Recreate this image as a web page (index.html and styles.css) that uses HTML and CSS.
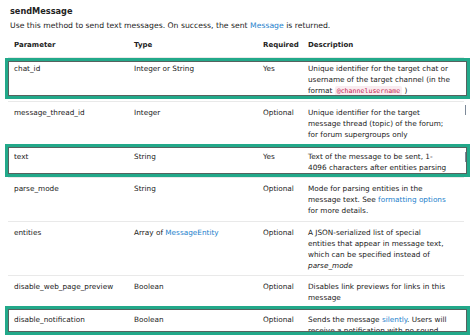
FILE: index.html
```html
<!DOCTYPE html>
<html>
<head>
<meta charset="utf-8">
<link rel="stylesheet" href="styles.css">
</head>
<body>
<div class="page">
  <h4 class="title">sendMessage</h4>
  <p class="lead">Use this method to send text messages. On success, the sent <a href="#">Message</a> is returned.</p>
  <div class="table">
    <div class="row head">
      <div>Parameter</div><div>Type</div><div>Required</div><div>Description</div>
    </div>
    <div class="row">
      <div>chat_id</div><div>Integer or String</div><div>Yes</div>
      <div>Unique identifier for the target chat or<br>username of the target channel (in the<br>format <code>@channelusername</code> )</div>
    </div>
    <div class="row">
      <div>message_thread_id</div><div>Integer</div><div>Optional</div>
      <div>Unique identifier for the target<br>message thread (topic) of the forum;<br>for forum supergroups only</div>
    </div>
    <div class="row">
      <div>text</div><div>String</div><div>Yes</div>
      <div>Text of the message to be sent, 1-<br>4096 characters after entities parsing</div>
    </div>
    <div class="row">
      <div>parse_mode</div><div>String</div><div>Optional</div>
      <div>Mode for parsing entities in the<br>message text. See <a href="#">formatting options</a><br>for more details.</div>
    </div>
    <div class="row">
      <div>entities</div><div>Array of <a href="#">MessageEntity</a></div><div>Optional</div>
      <div>A JSON-serialized list of special<br>entities that appear in message text,<br>which can be specified instead of<br><em>parse_mode</em></div>
    </div>
    <div class="row">
      <div>disable_web_page_preview</div><div>Boolean</div><div>Optional</div>
      <div>Disables link previews for links in this<br>message</div>
    </div>
    <div class="row">
      <div>disable_notification</div><div>Boolean</div><div>Optional</div>
      <div>Sends the message <a href="#">silently</a>. Users will<br>receive a notification with no sound.</div>
    </div>
  </div>
  <div class="mark mark-chat"></div>
  <div class="mark mark-text"></div>
  <div class="mark mark-notify"></div>
  <div class="tick tick-a"></div>
  <div class="tick tick-b"></div>
</div>
</body>
</html>
```

FILE: styles.css
```css
body {
  margin: 0;
  background: #fff;
  font-family: "DejaVu Sans", "Noto Sans", sans-serif;
  font-size: 7.3px;
  color: #222;
}

.page {
  position: relative;
  width: 474px;
  height: 335px;
  overflow: hidden;
  padding: 5px 10px 0;
  box-sizing: border-box;
}

.title {
  margin: 0;
  font-size: 8.2px;
  font-weight: bold;
  line-height: 12px;
  color: #222;
}

.lead {
  margin: 2.5px 0 0;
  font-size: 7.7px;
  line-height: 11px;
}

a {
  color: #2481cc;
  text-decoration: none;
}

.table {
  margin: 4.5px 0 0 -2px;
  width: 456px;
}

.row {
  display: grid;
  grid-template-columns: 120px 129px 45px 1fr;
  border-top: 1px solid #e9e9e9;
}

.row > div {
  padding: 5px 6px 4.5px;
  line-height: 11px;
  white-space: nowrap;
}

.row.head {
  border-top: none;
  font-weight: bold;
  font-size: 7px;
}

.row.head > div {
  padding-bottom: 5.5px;
}

code {
  font-family: "DejaVu Sans Mono", "Liberation Mono", monospace;
  font-size: 6.6px;
  color: #c7254e;
  background: #f9ecf0;
  padding: 1px 2px;
  border-radius: 2px;
}

em {
  font-style: italic;
}

.mark {
  position: absolute;
  left: 5px;
  width: 465px;
  border: 3.5px solid #22a98a;
  box-sizing: border-box;
  box-shadow: inset 0 0 0 1px #56625f;
}

.mark-chat {
  top: 58px;
  height: 41px;
}

.mark-text {
  top: 144px;
  height: 33px;
}

.mark-notify {
  top: 306px;
  height: 29px;
}

.tick {
  position: absolute;
  left: 465px;
  width: 1px;
  background: #7d8a99;
}

.tick-a {
  top: 105px;
  height: 10px;
}

.tick-b {
  top: 152px;
  height: 10px;
}
```
